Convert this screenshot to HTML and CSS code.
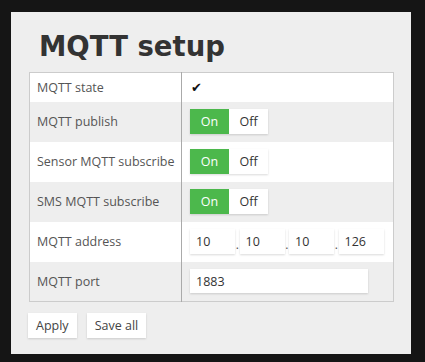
FILE: index.html
```html
<!DOCTYPE html>
<html lang="en">
<head>
  <meta charset="utf-8">
  <title>MQTT setup</title>
  <meta name="viewport" content="width=device-width,initial-scale=1">
  <link rel="stylesheet" href="styles.css">
</head>
<body>
  <div class="panel">
    <h1>MQTT setup</h1>

    <table class="setup">
      <tr>
        <td class="lbl">MQTT state</td>
        <td><span class="check">&#10004;</span></td>
      </tr>
      <tr>
        <td class="lbl">MQTT publish</td>
        <td><div class="toggle"><span class="on">On</span><span class="off">Off</span></div></td>
      </tr>
      <tr>
        <td class="lbl">Sensor MQTT subscribe</td>
        <td><div class="toggle"><span class="on">On</span><span class="off">Off</span></div></td>
      </tr>
      <tr>
        <td class="lbl">SMS MQTT subscribe</td>
        <td><div class="toggle"><span class="on">On</span><span class="off">Off</span></div></td>
      </tr>
      <tr>
        <td class="lbl">MQTT address</td>
        <td>
          <div class="ip">
            <input type="text" value="10"><span class="sep">.</span>
            <input type="text" value="10"><span class="sep">.</span>
            <input type="text" value="10"><span class="sep">.</span>
            <input type="text" value="126">
          </div>
        </td>
      </tr>
      <tr>
        <td class="lbl">MQTT port</td>
        <td><input type="text" class="port" value="1883"></td>
      </tr>
    </table>

    <div class="btns">
      <button>Apply</button>
      <button>Save all</button>
    </div>
  </div>
</body>
</html>
```

FILE: styles.css
```css
/* RESET */
* { box-sizing:border-box; margin:0; padding:0; }
html, body { height:100%; background:#151515; font-family:"Open Sans", sans-serif; color:#555; }

/* PANEL */
.panel {
  width:400px; height:342px;
  margin:12px 0 0 11px;
  background:#eee;
  padding:18px 18px 0 17px;
}
.panel h1 {
  font-family:"DejaVu Sans", sans-serif;
  font-size:27.5px; font-weight:700; color:#333;
  line-height:32px; padding-left:11px;
  margin-bottom:10px;
}

/* TABLE */
.setup {
  border-collapse:collapse; width:365px; table-layout:fixed;
  border:1px solid #ccc; margin-left:1px;
  font-size:12.5px;
}
.setup td { height:40px; padding:0 8px; vertical-align:middle; }
.setup tr:first-child td { height:29px; }
.setup tr:nth-child(odd) td { background:#fff; }
.setup tr:nth-child(even) td { background:#eee; }
.setup td.lbl { width:152px; border-right:1px solid #aaa; padding:0 2px 0 7px; white-space:nowrap; }
.check { color:#111; font-size:13px; font-family:"DejaVu Sans", sans-serif; font-weight:700; padding-left:1px; }

/* TOGGLE */
.toggle {
  display:inline-flex; height:25px;
  box-shadow:0 1px 2px rgba(0,0,0,.15);
}
.toggle span {
  width:39px; display:flex; align-items:center; justify-content:center;
  font-size:12.5px;
}
.toggle .on { background:#4cb84c; color:#fff; }
.toggle .off { background:#fff; color:#333; }

/* INPUTS */
input[type=text] {
  height:25px; border:none; background:#fff;
  box-shadow:0 1px 2px rgba(0,0,0,.15);
  font-family:"Open Sans", sans-serif; font-size:12.5px; color:#333;
  padding:0 6px; outline:none;
}
.ip { display:flex; align-items:center; }
.ip input { width:45px; }
.ip .sep { width:4.5px; text-align:center; font-size:12px; color:#555; padding-top:5px; }
.port { width:178px; height:24px !important; }

/* BUTTONS */
.btns { display:flex; gap:10px; margin-top:11px; }
button {
  height:25px; padding:0 8px; background:#fff; color:#444;
  border:none; box-shadow:0 1px 2px rgba(0,0,0,.15);
  font-family:"Open Sans", sans-serif; font-size:12.5px;
}
```
